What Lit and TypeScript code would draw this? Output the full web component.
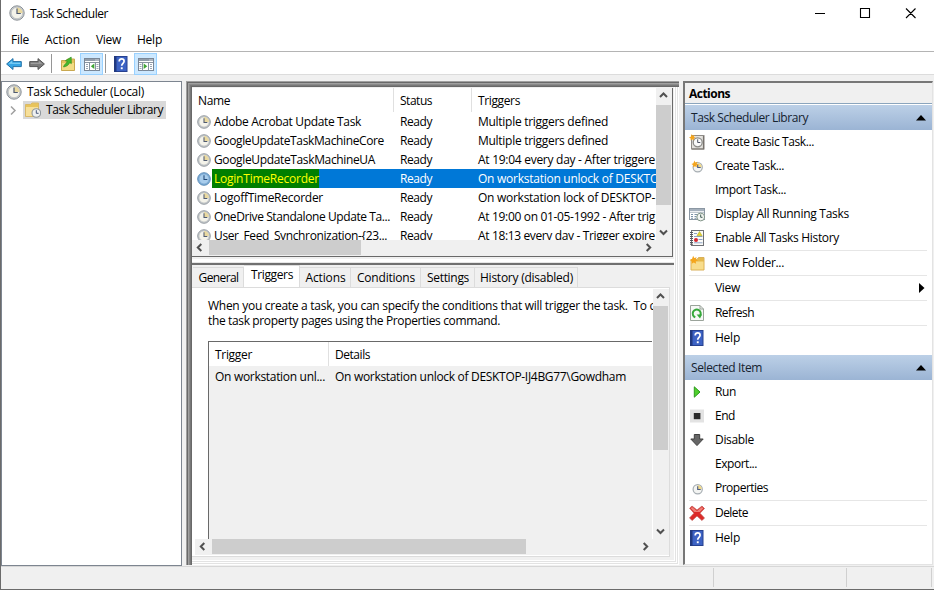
import { LitElement, html, css, svg, nothing } from "lit";
import { customElement, property } from "lit/decorators.js";

/* A single line of text whose tracking is tuned so that it spans w pixels. */
@customElement("ui-text")
class UiText extends LitElement {
  @property() text = "";
  @property({ type: Number }) w = 0;
  static styles = css`
    :host { display: inline-block; white-space: pre; flex: none; }
    .run { display: inline-block; font-variant-ligatures: none; }
  `;
  render() {
    return html`<span class="run">${this.text}</span>`;
  }
  updated() {
    const run = this.renderRoot.querySelector(".run") as HTMLElement;
    run.style.letterSpacing = "0px";
    const natural = run.getBoundingClientRect().width;
    if (this.w && natural) {
      run.style.letterSpacing = `${(this.w - natural) / this.text.length}px`;
    }
  }
}

const t = (text: string, w: number) => html`<ui-text .text=${text} .w=${w}></ui-text>`;

const helpArt = svg`
  <rect x="1.5" y=".5" width="12.5" height="15" fill="#3c62c4" stroke="#27418f"/>
  <rect x="1" y="0" width="2.5" height="16" fill="#21397f"/>
  <path d="M6.2 5.4C6.2 3.6 7.3 2.9 8.6 2.9s2.5.8 2.5 2.3c0 2-2.4 2.3-2.4 4.6" fill="none" stroke="#fff" stroke-width="1.7"/>
  <rect x="7.8" y="11.3" width="1.9" height="1.9" fill="#fff"/>`;

const clockFace = svg`
  <circle cx="8" cy="8" r="7.2" fill="#c9ced3" stroke="#8b9196" stroke-width="1"/>
  <circle cx="8" cy="8" r="5.7" fill="#f4f3ea" stroke="#b0b4b6" stroke-width=".6"/>
  <path d="M8 8V2.4A5.6 5.6 0 0 1 13.6 8z" fill="#e9d9a0"/>
  <path d="M8 3.6V8.5H11.8" fill="none" stroke="#4f5a70" stroke-width="1.2"/>`;

const miniClock = svg`
  <circle cx="8.7" cy="9.3" r="4.6" fill="#f3f4f2" stroke="#a6adb2" stroke-width="1.2"/>
  <path d="M8.7 9.3V5.3A4 4 0 0 1 12.7 9.3z" fill="#f0d98a"/>
  <path d="M8.7 6.2v3.3h3" fill="none" stroke="#4c5b80" stroke-width="1.1"/>`;

const spark = svg`<path d="M3.2 0l1 2.1L6.600 1.300 5.700 3.500 8 4.500 5.600 5.300 6 7.500 3.800 6.300 1.800 7.600 2 5.200 0 4 2.100 3.100z" fill="#f5a51c"/>`;

const art: Record<string, unknown> = {
  clock: clockFace,
  clockSel: svg`
    <circle cx="8" cy="8" r="7.2" fill="#86b4dc" stroke="#4c7fae" stroke-width="1"/>
    <circle cx="8" cy="8" r="5.700" fill="#a9cdec" stroke="#6c9cc8" stroke-width=".6"/>
    <path d="M8 3.600V8.500H11.800" fill="none" stroke="#234a78" stroke-width="1.200"/>`,
  back: svg`<path d="M.6 8L7 2.600V5.600H15.300V10.600H7V13.500z" fill="#35a5e4" stroke="#2472a8" stroke-width="1"/><path d="M2.500 7.800L6.200 4.700V6.700H14.300V8z" fill="#7fd0f6"/>`,
  forward: svg`<path d="M15.400 8L9 2.600V5.600H.7V10.600H9V13.500z" fill="#7b7b7b" stroke="#555" stroke-width="1"/><path d="M13.500 7.800L9.800 4.700V6.700H1.700V8z" fill="#a2a2a2"/>`,
  up: svg`
    <path d="M1.500 4.500H6L7.500 3H14.500V14.500H1.500z" fill="#e5c35c" stroke="#c9a850"/>
    <path d="M2 7H14V14H2z" fill="#f3dc85"/>
    <path d="M3.500 11C4 8.500 5.800 8 7.400 5.600L5.400 4.800 11.200 1 11.400 7.600 9.700 6.700C8.300 9.400 6.500 10.500 3.500 11z" fill="#46b82c" stroke="#2c8b1c" stroke-width=".6"/>`,
  paneLeft: svg`
    <rect x=".5" y="2.500" width="15" height="12" fill="#fff" stroke="#7a8797"/>
    <rect x="1" y="3" width="14" height="2" fill="#929daa"/>
    <path d="M11.500 4h1M13.500 4h1" stroke="#fff"/>
    <path d="M1 6.500h14M5.500 7v7.500M11.500 7v7.500" stroke="#8994a1"/>
    <path d="M2 8.500h2M2 10.500h2M2 12.500h2M12.500 8.500h2M12.500 10.500h2M12.500 12.500h2" stroke="#9aa6b4"/>
    <path d="M10.300 7.500v5.500L6.800 10.300z" fill="#3fa535"/>`,
  paneRight: svg`
    <rect x=".5" y="2.500" width="15" height="12" fill="#fff" stroke="#7a8797"/>
    <rect x="1" y="3" width="14" height="2" fill="#929daa"/>
    <path d="M11.500 4h1M13.500 4h1" stroke="#fff"/>
    <path d="M1 6.500h14M10.500 7v7.500M4.500 7v7.500" stroke="#8994a1"/>
    <path d="M12 8.500h2M12 10.500h2M12 12.500h2M1.500 8.500h2M1.500 10.500h2M1.500 12.500h2" stroke="#9aa6b4"/>
    <path d="M5.700 7.500v5.500L9.300 10.300z" fill="#3fa535"/>`,
  help: helpArt,
  folderClock: svg`
    <path d="M.5 2.500H5.500L7 1H13.500V14.500H.5z" fill="#e8c45b" stroke="#d9b968"/>
    <path d="M1 5H13V14H1z" fill="#f7e09a"/>
    <circle cx="11.300" cy="11" r="4.300" fill="#eef0f0" stroke="#8f979d" stroke-width="1.100"/>
    <path d="M11.300 8.200V11.300H13.600" fill="none" stroke="#45557a"/>`,
  basic: svg`
    <rect x="2.500" y="1.500" width="12.500" height="13.500" fill="#e4e2de" stroke="#8f8c88"/>
    <path d="M14.500 2v13H3" fill="none" stroke="#77726d" stroke-width="1.200"/>
    <circle cx="8.700" cy="8.300" r="4.500" fill="#fafafa" stroke="#8b8b88" stroke-width="1.300"/>
    <path d="M8.700 5.300v3.200h2.600" fill="none" stroke="#4e5566"/>
    <g transform="scale(.85)">${spark}</g>`,
  create: svg`${miniClock}<g transform="translate(2.500 2.500) scale(.9)">${spark}</g>`,
  props: miniClock,
  running: svg`
    <rect x=".5" y="2.500" width="15" height="11" fill="#fff" stroke="#8b97a3"/>
    <rect x="1" y="3" width="14" height="2.200" fill="#a5b0bc"/>
    <path d="M1 6.500h14" stroke="#c0c8cf"/>
    <path d="M2 8.500h2M5.500 8.500h3M2 10.500h2M5.500 10.500h2M2 12.300h2M5.500 12.300h2" stroke="#7c93a8"/>
    <circle cx="11.700" cy="11" r="3.900" fill="#f3f5f2" stroke="#7f9386"/>
    <path d="M11.700 8.500V11.300H13.500" fill="none" stroke="#3f5d53"/>`,
  history: svg`
    <rect x="2.500" y=".5" width="12" height="15" fill="#fbfbf7" stroke="#6f7175"/>
    <path d="M1 2.500h3M1 4.500h3M1 6.500h3M1 8.500h3M1 10.500h3M1 12.500h3M1 14.200h3" stroke="#55585e"/>
    <path d="M5 6.500h8.500M5 12.800h8.500M9.500 9.500h4M5 3.500h3" stroke="#8ea3c8"/>
    <path d="M10.500 1.500l2.600 4.300H8z" fill="#e6d72c" stroke="#a89d1a" stroke-width=".5"/>
    <circle cx="7" cy="10" r="2" fill="#d7262f"/>`,
  newFolder: svg`
    <path d="M2 4.500H8L9.500 2.500H15V15H2z" fill="#e5b94d" stroke="#d9b05a"/>
    <path d="M2.500 6.500H14.500V14.500H2.500z" fill="#f8dd8d"/>
    <g transform="translate(.8 .8) scale(1.050)">${spark}</g>`,
  refresh: svg`
    <path d="M1.500 .5H11L14.500 4V15.500H1.500z" fill="#f6f8f6" stroke="#9aa39a"/>
    <path d="M11 .5V4H14.500" fill="none" stroke="#9aa39a"/>
    <path d="M6.300 12.300A4 4 0 1 1 10.900 11" fill="none" stroke="#35a83a" stroke-width="2"/>
    <path d="M7.600 9.500H13L11 13.500z" fill="#35a83a"/>`,
  run: svg`<path d="M5.300 2.800L11 8 5.300 13.200z" fill="#4fcf2c" stroke="#2b9a1c" stroke-width="1"/>`,
  end: svg`<rect x="1" y="1.500" width="14" height="13" fill="#e3e3e3"/><rect x="4.800" y="5" width="6.600" height="6.200" fill="#2b2b2b"/>`,
  disable: svg`<path d="M5.300 2.500h5.400v4.500h3.500L8 13.600 1.800 7h3.500z" fill="#666" stroke="#3f3f3f"/>`,
  del: svg`<path d="M3 1L8 5 13 1 15.500 3.500 11 8.200 15.500 13 13 15.500 8 11 3.200 15.500.5 13 5 8.200.6 3.200z" fill="#dc2a28" stroke="#c05a55" stroke-width=".7"/><path d="M3 2L8 6 13 2 14.300 3.500 10.800 7H5.200L1.800 3.300z" fill="#ee8078"/>`,
};

const icon = (name: string, size = 16, cls = "") =>
  name ? html`<svg class="icon ${cls}" width=${size} height=${size} viewBox="0 0 16 16">${art[name]}</svg>` : nothing;

const arrowPath: Record<string, string> = {
  up: "M4.500 9.500L8 6l3.500 3.500",
  down: "M4.500 6L8 9.500 11.500 6",
  left: "M9.800 4.500L6.300 8l3.500 3.500",
  right: "M6.200 4.500L9.700 8l-3.500 3.500",
};
const arrow = (dir: string) => html`<svg class="arrow" width="15" height="15" viewBox="0.500 0.500 15 15">
  <path d=${arrowPath[dir]} fill="none" stroke="#505050" stroke-width="2"/></svg>`;

const tasks: [string, number, string, number][] = [
  ["Adobe Acrobat Update Task", 147, "Multiple triggers defined", 130],
  ["GoogleUpdateTaskMachineCore", 170, "Multiple triggers defined", 130],
  ["GoogleUpdateTaskMachineUA", 161, "At 19:04 every day - After triggere", 177],
  ["LoginTimeRecorder", 105, "On workstation unlock of DESKTO", 181],
  ["LogoffTimeRecorder", 109, "On workstation lock of DESKTOP-", 177],
  ["OneDrive Standalone Update Ta...", 176, "At 19:00 on 01-05-1992 - After trig", 177],
  ["User_Feed_Synchronization-{23...", 173, "At 18:13 every day - Trigger expire", 177],
];
const current = 3;

type Item = { icon: string; text: string; w: number; sep?: boolean; more?: boolean };
const library: Item[] = [
  { icon: "basic", text: "Create Basic Task...", w: 99 },
  { icon: "create", text: "Create Task...", w: 69 },
  { icon: "", text: "Import Task...", w: 71 },
  { icon: "running", text: "Display All Running Tasks", w: 134 },
  { icon: "history", text: "Enable All Tasks History", w: 124, sep: true },
  { icon: "newFolder", text: "New Folder...", w: 69, sep: true },
  { icon: "", text: "View", w: 25, sep: true, more: true },
  { icon: "refresh", text: "Refresh", w: 39, sep: true },
  { icon: "help", text: "Help", w: 25 },
];
const selected: Item[] = [
  { icon: "run", text: "Run", w: 21 },
  { icon: "end", text: "End", w: 20 },
  { icon: "disable", text: "Disable", w: 39 },
  { icon: "", text: "Export...", w: 42 },
  { icon: "props", text: "Properties", w: 53, sep: true },
  { icon: "del", text: "Delete", w: 33, sep: true },
  { icon: "help", text: "Help", w: 25 },
];

@customElement("app-root")
class AppRoot extends LitElement {
  static styles = css`
    :host { display: block; }
    * { box-sizing: border-box; }
    .window {
      width: 934px; height: 590px; overflow: hidden; background: #f0f0f0; color: #000;
      border-left: 1px solid #6b6b6b; border-bottom: 1px solid #6b6b6b;
      font: 12px/16px "Open Sans", "Noto Sans", sans-serif;
      display: flex; flex-direction: column;
    }
    .window > * { flex: none; }
    .icon, .arrow { display: block; flex: none; }
    .title { height: 28px; background: #fff; display: flex; align-items: center; padding: 0 17px 2px 8px; gap: 5px; }
    .title ui-text { padding-top: 2px; }
    .controls { margin-left: auto; }
    .menu { height: 23px; background: #fff; display: flex; align-items: center; padding: 1px 0 0 10px; gap: 16px; }
    .tools {
      height: 24px; background: #fff; border-top: 1px solid #b4b4b4; border-bottom: 1px solid #dcdcdc;
      display: flex; align-items: center; padding: 1px 0 0 5px;
    }
    .m4 { margin-right: 4px; } .m5 { margin-right: 5px; } .m6 { margin-right: 6px; } .m7 { margin-right: 7px; }
    .rule { width: 1px; height: 19px; background: #969696; margin-right: 8px; }
    .rule.after { margin: 0 7px 0 2px; }
    .toggle { width: 23px; height: 22px; background: #cce8ff; border: 1px solid #99d1ff; display: grid; place-items: center; }
    .body { height: 491px; display: grid; grid-template-columns: 181px 493px 250px; column-gap: 4px; padding-top: 6px; }
    .tree { border: 1px solid #7d8590; background: #fff; height: 485px; padding: 1px 0 0 4px; }
    .root { height: 18px; display: flex; align-items: center; gap: 5px; }
    .node { height: 18px; display: flex; align-items: center; }
    .chev { width: 17px; flex: none; }
    .hit { display: flex; align-items: center; gap: 5px; background: #d9d9d9; padding: 0 3px 0 2px; height: 18px; }
    .center {
      height: 484px; padding: 7px 6px 8px 6px; background: #f0f0f0;
      box-shadow:
        inset 1px 1px 0 #a0a0a0, inset 2px 2px 0 #696969, inset 3px 3px 0 #a0a0a0,
        inset 4px 4px 0 #8a8a8a, inset 5px 5px 0 #787878, inset 6px 6px 0 #696969,
        inset -1px -1px 0 #fff, inset -2px -2px 0 #e3e3e3, inset -3px -3px 0 #fff,
        inset -4px -4px 0 #e3e3e3, inset -5px -5px 0 #fff;
      display: flex; flex-direction: column;
    }
    .list { height: 169px; width: 481px; background: #fff; border-right: 1px solid #696969; border-bottom: 1px solid #696969; display: grid; grid-template: 152px 16px / 464px 16px; overflow: hidden; flex: none; }
    .rows { overflow: hidden; }
    .row { display: grid; grid-template-columns: 202px 78px 184px; height: 19px; line-height: 19px; }
    .row > * { min-width: 0; }
    .cell { display: flex; align-items: center; padding-left: 6px; }
    .name { display: flex; align-items: center; padding-left: 5px; gap: 1px; }
    .name .tag { padding: 0 0 0 2px; height: 19px; }
    .heads { height: 24px; }
    .heads .cell { border-right: 1px solid #e0e0e0; height: 24px; }
    .heads .cell:last-child { border-right: 0; }
    .sel { background: linear-gradient(90deg, #fff 20px, #0078d7 20px); color: #fff; }
    .sel .tag { background: #007f00; color: #ffff00; }
    .vbar, .hbar { background: #f0f0f0; display: flex; }
    .vbar { flex-direction: column; justify-content: space-between; }
    .hbar { justify-content: space-between; }
    .thumb { background: #cdcdcd; }
    .list .vbar .thumb { width: 15px; height: 100px; margin-bottom: 18px; }
    .list .hbar .thumb { width: 152px; height: 15px; margin-right: 278px; }
    .corner { background: #f0f0f0; }
    .split { height: 8px; border-bottom: 2px solid #707070; background: linear-gradient(#f0f0f0 2px, #fff 2px, #fff 5px, #e6e6e6 5px); width: 482px; flex: none; }
    .tabs { height: 22px; display: flex; align-items: flex-end; padding-left: 1px; flex: none; }
    .tab { height: 20px; border: 1px solid #dcdcdc; border-left: 0; border-bottom: 0; display: flex; align-items: center; justify-content: center; padding-left: 1px; }
    .tab.on { height: 22px; background: #fff; padding-bottom: 3px; }
    .w0 { width: 51px; } .w1 { width: 56px; } .w2 { width: 51px; } .w3 { width: 70px; } .w4 { width: 54px; } .w5 { width: 103px; }
    .page { width: 478px; height: 270px; background: #fff; border: 1px solid #dcdcdc; border-left: 0; display: grid; grid-template: 251px 16px / 461px 16px; flex: none; }
    .doc { overflow: hidden; padding: 10px 0 0 16px; line-height: 15px; }
    .table { margin-top: 13px; border: 1px solid #696969; border-right: 0; border-bottom: 0; height: 198px; background: #f0f0f0; width: 444px; }
    .trow { display: grid; grid-template-columns: 120px 1fr; align-items: center; height: 20px; }
    .trow.head { height: 24px; background: #fff; }
    .head .cell:first-child { border-right: 1px solid #e0e0e0; height: 24px; }
    .page .vbar { height: 250px; margin-top: 1px; }
    .page .vbar .thumb { width: 15px; height: 144px; margin-bottom: 72px; }
    .page .hbar { margin-left: 3px; }
    .page .hbar .thumb { width: 314px; height: 15px; margin-right: 110px; }
    .actions { height: 484px; border: 1px solid #e3e3e3; border-left: 2px solid #777; border-top: 2px solid #777; background: #fff; }
    .ahead { height: 21px; background: #f0f0f0; border-bottom: 1px solid #8ba5bd; display: flex; align-items: center; padding: 1px 0 0 4px; font-weight: 700; }
    .sect { height: 25px; background: linear-gradient(#bcd0e7, #9bb4d4); color: #15222f; display: flex; align-items: center; justify-content: space-between; padding: 0 6px; margin-top: 1px; }
    .second { margin-top: 5px; }
    .item { height: 24px; display: grid; grid-template-columns: 26px 1fr auto; align-items: center; padding: 0 7px 0 4px; }
    .sep { height: 25px; padding-bottom: 1px; background: linear-gradient(#e6e6e6, #e6e6e6) 4px 100% / calc(100% - 9px) 1px no-repeat; }
    .txt { grid-column: 2; }
    .status { height: 23px; border-top: 1px solid #d7d7d7; display: flex; justify-content: flex-end; padding: 1px 2px 2px 0; }
    .pane { border-left: 1px solid #d0d0d0; }
    .p1 { width: 133px; } .p2 { width: 86px; border-right: 1px solid #d0d0d0; }
  `;

  item(i: Item) {
    return html`<div class="item ${i.sep ? "sep" : ""}">
      ${icon(i.icon)}<div class="txt">${t(i.text, i.w)}</div>
      ${i.more ? html`<svg width="6" height="10"><path d="M0 0L5.500 5 0 10z"/></svg>` : nothing}
    </div>`;
  }

  section(name: string, w: number, items: Item[], cls = "") {
    return html`<div class="sect ${cls}">${t(name, w)}<svg width="10" height="6"><path d="M0 5.500L5 0l5 5.500z"/></svg></div>
      ${items.map((i) => this.item(i))}`;
  }

  render() {
    const tabs: [string, number][] = [
      ["General", 40], ["Triggers", 42], ["Actions", 40], ["Conditions", 58], ["Settings", 42], ["History (disabled)", 93],
    ];
    return html`<div class="window">
      <div class="title">${icon("clock")}${t("Task Scheduler", 78)}
        <svg class="controls" width="102" height="11" viewBox="0 0 102 11">
          <path d="M0 5.500h10M45.500.5h9v9h-9zM91 .5l9.500 9.500M100.500 .5l-9.500 9.500" fill="none" stroke="#000" stroke-width="1.100"/>
        </svg>
      </div>
      <div class="menu">${t("File", 18)}${t("Action", 35)}${t("View", 25)}${t("Help", 25)}</div>
      <div class="tools">
        ${icon("back", 16, "m7")}${icon("forward", 16, "m6")}<span class="rule"></span>${icon("up", 16, "m4")}
        <span class="toggle">${icon("paneLeft")}</span><span class="rule after"></span>
        ${icon("help", 16, "m5")}<span class="toggle">${icon("paneRight")}</span>
      </div>
      <div class="body">
        <div class="tree">
          <div class="root">${icon("clock")}${t("Task Scheduler (Local)", 117)}</div>
          <div class="node">
            <svg class="chev" width="17" height="16"><path d="M5 4.500l4 4-4 4" fill="none" stroke="#a0a0a0" stroke-width="1.500"/></svg>
            <div class="hit">${icon("folderClock")}${t("Task Scheduler Library", 117)}</div>
          </div>
        </div>
        <div class="center">
          <div class="list">
            <div class="rows">
              <div class="row heads">
                <div class="cell">${t("Name", 32)}</div><div class="cell">${t("Status", 32)}</div><div class="cell">${t("Triggers", 42)}</div>
              </div>
              ${tasks.map(([n, nw, tr, tw], k) => html`<div class="row ${k === current ? "sel" : ""}">
                <div class="name">${icon(k === current ? "clockSel" : "clock", 14)}<span class="tag">${t(n, nw)}</span></div>
                <div class="cell">${t("Ready", 32)}</div><div class="cell">${t(tr, tw)}</div>
              </div>`)}
            </div>
            <div class="vbar">${arrow("up")}<div class="thumb"></div>${arrow("down")}</div>
            <div class="hbar">${arrow("left")}<div class="thumb"></div>${arrow("right")}</div>
            <div class="corner"></div>
          </div>
          <div class="split"></div>
          <div class="tabs">
            ${tabs.map(([n, w], k) => html`<div class="tab w${k} ${k === 1 ? "on" : ""}">${t(n, w)}</div>`)}
          </div>
          <div class="page">
            <div class="doc">
              <div>${t("When you create a task, you can specify the conditions that will trigger the task.  To c", 447)}</div>
              <div>${t("the task property pages using the Properties command.", 292)}</div>
              <div class="table">
                <div class="trow head"><div class="cell">${t("Trigger", 37)}</div><div class="cell">${t("Details", 35)}</div></div>
                <div class="trow"><div class="cell">${t("On workstation unl...", 110)}</div><div class="cell">${t("On workstation unlock of DESKTOP-IJ4BG77\\Gowdham", 291)}</div></div>
              </div>
            </div>
            <div class="vbar">${arrow("up")}<div class="thumb"></div>${arrow("down")}</div>
            <div class="hbar">${arrow("left")}<div class="thumb"></div>${arrow("right")}</div>
            <div class="corner"></div>
          </div>
        </div>
        <div class="actions">
          <div class="ahead">${t("Actions", 41)}</div>
          ${this.section("Task Scheduler Library", 117, library)}
          ${this.section("Selected Item", 71, selected, "second")}
        </div>
      </div>
      <div class="status"><div class="pane p1"></div><div class="pane p2"></div></div>
    </div>`;
  }
}
